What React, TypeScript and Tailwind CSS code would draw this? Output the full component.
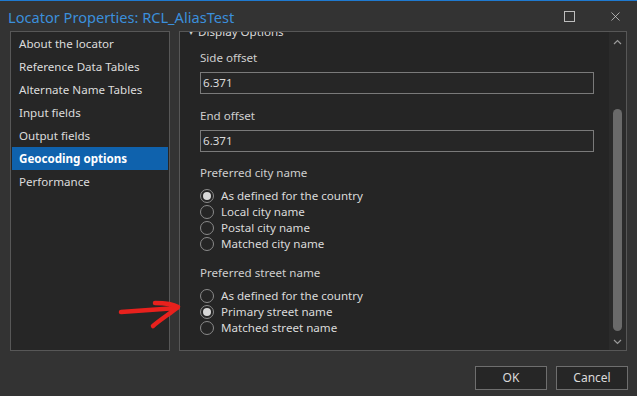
import { X } from "lucide-react";

const font = { fontFamily: '"Noto Sans", "Open Sans", sans-serif' };

const navItems = [
  "About the locator",
  "Reference Data Tables",
  "Alternate Name Tables",
  "Input fields",
  "Output fields",
  "Geocoding options",
  "Performance",
];

function Radio({ label, checked }: { label: string; checked?: boolean }) {
  return (
    <div className="flex items-center h-4 gap-[7px]">
      <span className="w-[14px] h-[14px] rounded-full border border-[#8a8a8a] flex items-center justify-center">
        {checked && <span className="w-[8px] h-[8px] rounded-full bg-[#d8d8d8]" />}
      </span>
      <span className="text-[11.6px] text-[#dadada]">{label}</span>
    </div>
  );
}

function Field({ label, value }: { label: string; value: string }) {
  return (
    <div className="flex flex-col">
      <div className="text-[11.6px] text-[#cfcfcf] h-[20px] leading-[20px]">{label}</div>
      <div className="mt-[4px] w-[394px] h-[22px] border border-[#7a7a7a] bg-[#262626] px-[2px] text-[11.6px] leading-[20px] text-[#dadada]">
        {value}
      </div>
    </div>
  );
}

export default function App() {
  return (
    <div
      className="w-[637px] h-[396px] bg-[#333333] border-t border-[#1f7ad1] flex flex-col relative overflow-hidden"
      style={font}
    >
      {/* title bar */}
      <div className="h-[30px] flex items-center justify-between pl-[8px] pr-[14px]">
        <div className="text-[14.6px] text-[#3b8fdb] leading-none mt-[2px]">Locator Properties: RCL_AliasTest</div>
        <div className="flex items-center gap-[33px]">
          <span className="w-[11px] h-[11px] border border-[#bdbdbd]" />
          <X size={15} strokeWidth={1.2} className="text-[#cfcfcf]" />
        </div>
      </div>

      {/* body */}
      <div className="flex gap-[9px] px-[10px] h-[320px]">
        <div className="w-[160px] border border-[#575757] bg-[#262626] pl-[1px] pr-[1px]">
          {navItems.map((item) => {
            const active = item === "Geocoding options";
            return (
              <div
                key={item}
                className={
                  active
                    ? "h-[23px] leading-[23px] pl-[7px] text-[11.6px] font-bold text-white bg-[#0f62ad]"
                    : "h-[23px] leading-[23px] pl-[7px] text-[11.6px] text-[#dcdcdc]"
                }
              >
                {item}
              </div>
            );
          })}
        </div>

        <div className="flex-1 border border-[#575757] bg-[#252525] flex overflow-hidden">
          <div className="flex-1 overflow-hidden pl-[20px]">
            <div className="-mt-[10px] flex items-center h-[20px] gap-[5px] -ml-[11px]">
              <span className="text-[8px] text-[#cfcfcf]">▾</span>
              <span className="text-[11.6px] text-[#dadada]">Display Options</span>
            </div>
            <div className="mt-[6px] flex flex-col gap-[12px]">
              <Field label="Side offset" value="6.371" />
              <Field label="End offset" value="6.371" />
            </div>
            <div className="mt-[11px] text-[11.6px] text-[#cfcfcf] h-[20px] leading-[20px]">Preferred city name</div>
            <div className="mt-[5px] flex flex-col">
              <Radio label="As defined for the country" checked />
              <Radio label="Local city name" />
              <Radio label="Postal city name" />
              <Radio label="Matched city name" />
            </div>
            <div className="mt-[11px] text-[11.6px] text-[#cfcfcf] h-[20px] leading-[20px]">Preferred street name</div>
            <div className="mt-[5px] flex flex-col">
              <Radio label="As defined for the country" />
              <Radio label="Primary street name" checked />
              <Radio label="Matched street name" />
            </div>
          </div>

          {/* scrollbar */}
          <div className="w-[17px] bg-[#2b2b2b] flex flex-col items-center py-[4px]">
            <svg width="9" height="6" viewBox="0 0 9 6" className="mt-[3px]">
              <path d="M1 5 L4.5 1.5 L8 5" stroke="#9a9a9a" strokeWidth="1.2" fill="none" />
            </svg>
            <div className="mt-[64px] w-[9px] h-[222px] rounded-full bg-[#6a6a6a]" />
            <svg width="9" height="6" viewBox="0 0 9 6" className="mt-[8px]">
              <path d="M1 1 L4.5 4.5 L8 1" stroke="#9a9a9a" strokeWidth="1.2" fill="none" />
            </svg>
          </div>
        </div>
      </div>

      {/* footer */}
      <div className="flex justify-end gap-[9px] pr-[9px] mt-[15px]">
        <button className="w-[72px] h-[24px] border border-[#6e6e6e] bg-[#262626] text-[12px] text-[#dadada]">
          OK
        </button>
        <button className="w-[72px] h-[24px] border border-[#6e6e6e] bg-[#262626] text-[12px] text-[#dadada]">
          Cancel
        </button>
      </div>

      {/* red annotation arrow */}
      <svg className="absolute left-[115px] top-[296px]" width="70" height="34" viewBox="0 0 70 34">
        <path d="M6 15 L62 11" stroke="#e8211d" strokeWidth="4.5" strokeLinecap="round" fill="none" />
        <path
          d="M40 6 C50 6 58 7 63 10 C56 16 46 22 38 29"
          stroke="#e8211d"
          strokeWidth="4.5"
          strokeLinecap="round"
          strokeLinejoin="round"
          fill="none"
        />
      </svg>
    </div>
  );
}
